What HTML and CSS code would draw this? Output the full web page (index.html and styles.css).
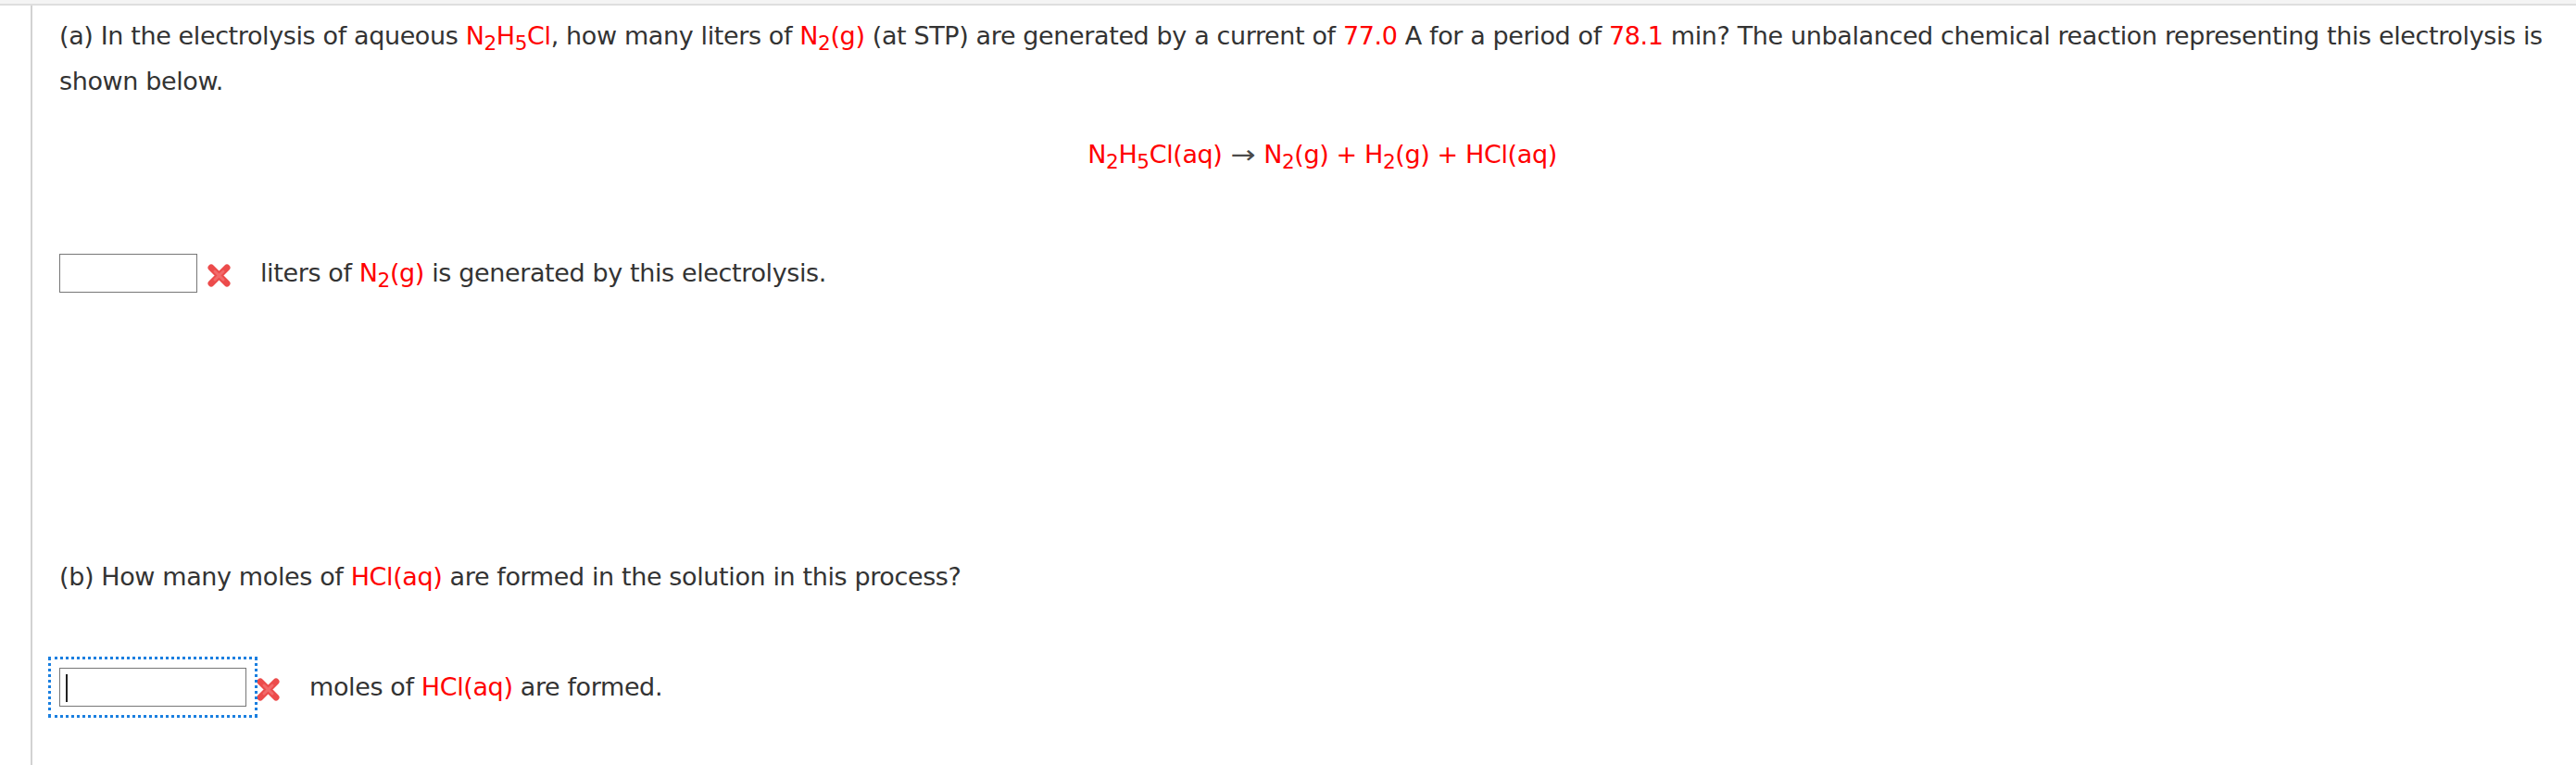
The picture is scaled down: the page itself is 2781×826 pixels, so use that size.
FILE: index.html
```html
<!DOCTYPE html>
<html>
<head>
<meta charset="utf-8">
<link rel="stylesheet" href="styles.css">
</head>
<body>
<div class="topbar"></div>
<div class="main">
  <div class="content">
    <p class="question">(a) In the electrolysis of aqueous <span class="chem">N<sub class="sb">2</sub>H<sub class="sb">5</sub>Cl</span>, how many liters of <span class="chem">N<sub class="sb">2</sub>(g)</span> (at STP) are generated by a current of <span class="chem">77.0</span> A for a period of <span class="chem">78.1</span> min? The unbalanced chemical reaction representing this electrolysis is shown below.</p>
    <p class="equation"><span class="chem">N<sub class="sb">2</sub>H<sub class="sb">5</sub>Cl(aq)</span> <span class="arrow">→</span> <span class="chem">N<sub class="sb">2</sub>(g) + H<sub class="sb">2</sub>(g) + HCl(aq)</span></p>
    <div class="answer answer-a">
      <span class="field"><input class="box box-a" type="text"></span>
      <svg class="wrong" viewBox="0 0 27 27" width="27" height="27"><path d="M5 5 L22 22 M22 5 L5 22" stroke="#ec4b4b" stroke-width="7" stroke-linecap="round" fill="none"/><path d="M9 9 L18 18 M18 9 L9 18" stroke="#f26a6a" stroke-width="3" stroke-linecap="round" fill="none"/></svg>
      <span class="label">liters of <span class="chem">N<sub class="sb">2</sub>(g)</span> is generated by this electrolysis.</span>
    </div>
    <p class="question question-b">(b) How many moles of <span class="chem">HCl(aq)</span> are formed in the solution in this process?</p>
    <div class="answer answer-b">
      <span class="field"><input class="box box-b focused" type="text"><span class="caret"></span></span>
      <svg class="wrong" viewBox="0 0 27 27" width="27" height="27"><path d="M5 5 L22 22 M22 5 L5 22" stroke="#ec4b4b" stroke-width="7" stroke-linecap="round" fill="none"/><path d="M9 9 L18 18 M18 9 L9 18" stroke="#f26a6a" stroke-width="3" stroke-linecap="round" fill="none"/></svg>
      <span class="label">moles of <span class="chem">HCl(aq)</span> are formed.</span>
    </div>
  </div>
</div>
</body>
</html>
```
FILE: styles.css
```css
html, body {
  margin: 0;
  padding: 0;
  background: #ffffff;
}
body {
  font-family: "DejaVu Sans", Verdana, sans-serif;
  font-size: 27px;
  letter-spacing: -0.38px;
  color: #333333;
  overflow: hidden;
  height: 826px;
}
.topbar {
  height: 4px;
  background: #f4f4f4;
  border-bottom: 2px solid #dedede;
}
.main {
  height: 820px;
  padding-left: 33px;
}
.content {
  height: 100%;
  border-left: 2px solid #d2d2d2;
  padding-left: 29px;
  padding-right: 0;
}
.question {
  margin: 0;
  padding-top: 8px;
  line-height: 49px;
}
.question-b {
  padding-top: 0;
  margin-top: 279px;
}
.chem {
  color: #ff0000;
}
.sb {
  font-size: 0.8em;
  vertical-align: -6px;
  line-height: 0;
}
.equation {
  margin: 30px 0 0 0;
  line-height: 49px;
  text-align: center;
  padding-left: 10px;
}
.arrow {
  display: inline-block;
  color: #4a4a4a;
  transform: scaleX(1.2);
  margin: 0 3px;
}
.answer {
  display: flex;
  align-items: center;
  line-height: 49px;
}
.answer-a {
  margin-top: 79px;
}
.answer-b {
  margin-top: 70px;
}
.field {
  position: relative;
  display: block;
  height: 42px;
}
.box {
  display: block;
  box-sizing: border-box;
  height: 42px;
  margin: 0;
  padding: 0;
  border: 1px solid #777777;
  background: #ffffff;
  outline: none;
}
.box-a {
  width: 149px;
}
.box-b {
  width: 202px;
}
.focused {
  outline: 3px dotted #1a7fe0;
  outline-offset: 9px;
}
.caret {
  position: absolute;
  left: 7px;
  top: 7px;
  width: 2px;
  height: 30px;
  background: #222222;
}
.wrong {
  display: block;
  margin-left: 10px;
  margin-top: 5px;
  flex: none;
}
.label {
  margin-left: 31px;
}
```
